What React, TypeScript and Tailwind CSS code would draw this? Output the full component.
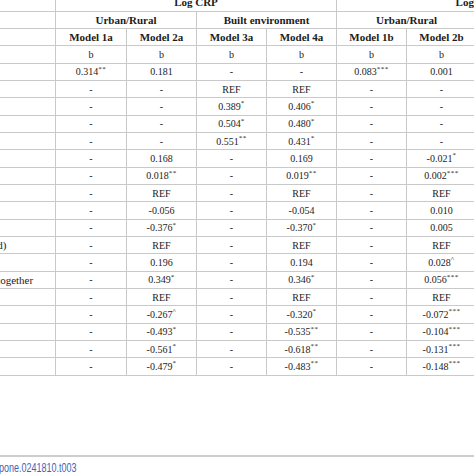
import React from 'react';

type Cell = { text: string; span?: number; bold?: boolean; label?: boolean };

const W = [96, 71, 70, 70, 70, 70, 70, 70, 70];
const LINE = 'border-[#c9c9c9]';

const rows: string[][] = [
  ['0.314**', '0.181', '-', '-', '0.083***', '0.001'],
  ['-', '-', 'REF', 'REF', '-', '-'],
  ['-', '-', '0.389*', '0.406*', '-', '-'],
  ['-', '-', '0.504*', '0.480*', '-', '-'],
  ['-', '-', '0.551**', '0.431*', '-', '-'],
  ['-', '0.168', '-', '0.169', '-', '-0.021*'],
  ['-', '0.018**', '-', '0.019**', '-', '0.002***'],
  ['-', 'REF', '-', 'REF', '-', 'REF'],
  ['-', '-0.056', '-', '-0.054', '-', '0.010'],
  ['-', '-0.376*', '-', '-0.370*', '-', '0.005'],
  ['-', 'REF', '-', 'REF', '-', 'REF'],
  ['-', '0.196', '-', '0.194', '-', '0.028^'],
  ['-', '0.349*', '-', '0.346*', '-', '0.056***'],
  ['-', 'REF', '-', 'REF', '-', 'REF'],
  ['-', '-0.267^', '-', '-0.320*', '-', '-0.072***'],
  ['-', '-0.493*', '-', '-0.535**', '-', '-0.104***'],
  ['-', '-0.561*', '-', '-0.618**', '-', '-0.131***'],
  ['-', '-0.479*', '-', '-0.483**', '-', '-0.148***'],
];

// first column is cropped on the left, only the tail of these labels shows
const labels: Record<number, string> = {
  10: '(married)',
  12: 'Living together',
};

function Value({ text }: { text: string }) {
  const m = text.match(/^(.*?)([*^]+)$/);
  if (!m) return <>{text}</>;
  return (
    <>
      {m[1]}
      <span className="relative -top-[3px] text-[7px] tracking-[0.5px]">{m[2]}</span>
    </>
  );
}

function Row({ cells }: { cells: Cell[] }) {
  let col = 0;
  return (
    <div className={`flex h-[17.33px] border-b ${LINE}`}>
      {cells.map((c, i) => {
        const span = c.span ?? 1;
        const width = W.slice(col, col + span).reduce((a, b) => a + b, 0);
        col += span;
        return (
          <div
            key={i}
            className={`shrink-0 flex items-center whitespace-nowrap overflow-hidden border-r ${LINE} ${
              c.label ? 'justify-start pl-[5px] text-[11px]' : 'justify-center'
            } ${c.bold ? 'font-bold text-[11px]' : c.label ? '' : 'text-[10px]'}`}
            style={{ width }}
          >
            {c.bold || c.label ? c.text : <Value text={c.text} />}
          </div>
        );
      })}
    </div>
  );
}

export default function App() {
  return (
    <div className="w-[474px] h-[474px] overflow-hidden bg-white flex flex-col text-[#1c1c1c] font-['Liberation_Serif',serif]">
      <div className="-ml-[40px] -mt-[5.5px] w-[700px] shrink-0">
        <Row
          cells={[
            { text: '' },
            { text: 'Log CRP', span: 4, bold: true },
            { text: 'Log IL-6', span: 4, bold: true },
          ]}
        />
        <Row
          cells={[
            { text: '' },
            { text: 'Urban/Rural', span: 2, bold: true },
            { text: 'Built environment', span: 2, bold: true },
            { text: 'Urban/Rural', span: 2, bold: true },
            { text: 'Built environment', span: 2, bold: true },
          ]}
        />
        <Row
          cells={[
            { text: '' },
            { text: 'Model 1a', bold: true },
            { text: 'Model 2a', bold: true },
            { text: 'Model 3a', bold: true },
            { text: 'Model 4a', bold: true },
            { text: 'Model 1b', bold: true },
            { text: 'Model 2b', bold: true },
            { text: 'Model 3b', bold: true },
            { text: 'Model 4b', bold: true },
          ]}
        />
        <Row cells={[{ text: '' }, ...Array.from({ length: 8 }, () => ({ text: 'b' }))]} />
        {rows.map((r, i) => (
          <Row
            key={i}
            cells={[
              { text: labels[i] ?? '', label: true },
              ...r.map(t => ({ text: t })),
              { text: '-' },
              { text: '-' },
            ]}
          />
        ))}
      </div>

      {/* footer rule + doi link */}
      <div className="mt-[79px] h-[2px] shrink-0 bg-[#cdcdcd]" />
      <div className="mt-[4px] -ml-[1px] origin-left scale-x-[0.72] text-[12.5px] leading-[14px] text-[#3f63b8] font-['Liberation_Sans',sans-serif] whitespace-nowrap">
        pone.0241810.t003
      </div>
    </div>
  );
}
